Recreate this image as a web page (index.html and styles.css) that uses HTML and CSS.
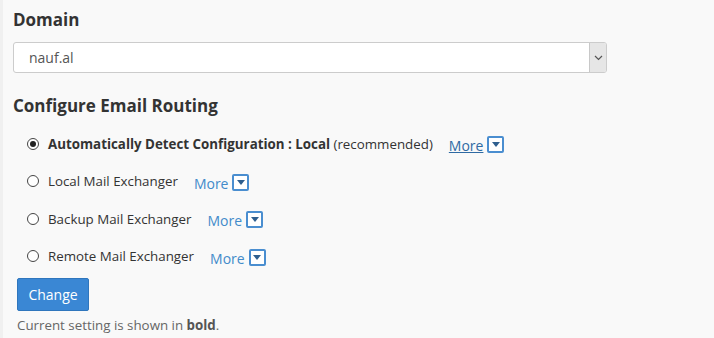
FILE: index.html
```html
<!DOCTYPE html>
<html>
<head>
<meta charset="utf-8">
<link rel="stylesheet" href="styles.css">
</head>
<body>
<div class="page">
  <h2 class="heading">Domain</h2>
  <div class="select">
    <span class="select-value">nauf.al</span>
    <span class="select-btn">
      <svg width="9" height="6" viewBox="0 0 9 6"><path d="M1 1 L4.5 4.5 L8 1" fill="none" stroke="#555" stroke-width="1.2"/></svg>
    </span>
  </div>
  <h2 class="heading heading-second">Configure Email Routing</h2>
  <ul class="options">
    <li class="option">
      <span class="radio checked"></span>
      <span class="label"><b>Automatically Detect Configuration : Local</b> (recommended)</span>
      <a class="more underline" href="#">More</a>
      <span class="toggle"><svg width="8" height="5" viewBox="0 0 8 5"><path d="M0 0 H8 L4 5 Z" fill="#2f5f8f"/></svg></span>
    </li>
    <li class="option">
      <span class="radio"></span>
      <span class="label">Local Mail Exchanger</span>
      <a class="more" href="#">More</a>
      <span class="toggle"><svg width="8" height="5" viewBox="0 0 8 5"><path d="M0 0 H8 L4 5 Z" fill="#2f5f8f"/></svg></span>
    </li>
    <li class="option">
      <span class="radio"></span>
      <span class="label">Backup Mail Exchanger</span>
      <a class="more" href="#">More</a>
      <span class="toggle"><svg width="8" height="5" viewBox="0 0 8 5"><path d="M0 0 H8 L4 5 Z" fill="#2f5f8f"/></svg></span>
    </li>
    <li class="option">
      <span class="radio"></span>
      <span class="label">Remote Mail Exchanger</span>
      <a class="more" href="#">More</a>
      <span class="toggle"><svg width="8" height="5" viewBox="0 0 8 5"><path d="M0 0 H8 L4 5 Z" fill="#2f5f8f"/></svg></span>
    </li>
  </ul>
  <button class="btn">Change</button>
  <p class="note">Current setting is shown in <b>bold</b>.</p>
</div>
</body>
</html>
```

FILE: styles.css
```css
html, body {
  margin: 0;
  padding: 0;
  background: #f9f9f9;
}
body {
  font-family: "Open Sans", "Liberation Sans", sans-serif;
  color: #333;
  border-left: 3px solid #f0f0f0;
  height: 338px;
  box-sizing: border-box;
  overflow: hidden;
}
.page {
  padding: 8px 0 0 10px;
}
.heading {
  font-size: 17px;
  font-weight: 700;
  margin: 0;
  line-height: 24px;
  color: #333;
}
.select {
  margin-top: 10px;
  width: 594px;
  height: 31px;
  box-sizing: border-box;
  border: 1px solid #ccc;
  border-radius: 3px;
  background: #fff;
  display: flex;
  align-items: stretch;
}
.select-value {
  flex: 1;
  padding-left: 15px;
  font-size: 14px;
  line-height: 29px;
  color: #555;
}
.select-btn {
  width: 16px;
  background: #e6e6e6;
  border-left: 1px solid #c8c8c8;
  border-radius: 0 2px 2px 0;
  display: flex;
  align-items: center;
  justify-content: center;
}
.heading-second {
  margin-top: 21px;
}
.options {
  list-style: none;
  margin: 7px 0 0 0;
  padding: 0 0 0 14px;
}
.option {
  display: flex;
  align-items: center;
  height: 37.5px;
  font-size: 13.33px;
}
.radio {
  width: 10px;
  height: 10px;
  border: 1px solid #444;
  border-radius: 50%;
  background: #fff;
  box-sizing: content-box;
  margin-right: 9px;
  position: relative;
}
.radio.checked::after {
  content: "";
  position: absolute;
  left: 2px;
  top: 2px;
  width: 6px;
  height: 6px;
  border-radius: 50%;
  background: #222;
}
.label {
  color: #333;
}
.label b {
  font-weight: 700;
}
.more {
  margin-left: 16px;
  color: #428bca;
  text-decoration: none;
  font-size: 14px;
  position: relative;
  top: 2px;
}
.more.underline {
  text-decoration: underline;
  color: #2f6aa3;
}
.toggle {
  margin-left: 4px;
  width: 13px;
  height: 13px;
  border: 2px solid #4a8ed0;
  border-radius: 2px;
  background: #fff;
  display: flex;
  align-items: center;
  justify-content: center;
  position: relative;
  top: 1px;
}
.btn {
  margin: 3px 0 0 4px;
  width: 72px;
  height: 33px;
  background: #3a87d4;
  border: 1px solid #2f76bd;
  border-radius: 2px;
  color: #fff;
  font-family: "Open Sans", "Liberation Sans", sans-serif;
  font-size: 14px;
  padding: 0;
  display: block;
}
.note {
  margin: 5px 0 0 4px;
  font-size: 13.33px;
  color: #666;
}
.note b {
  color: #555;
}
```
